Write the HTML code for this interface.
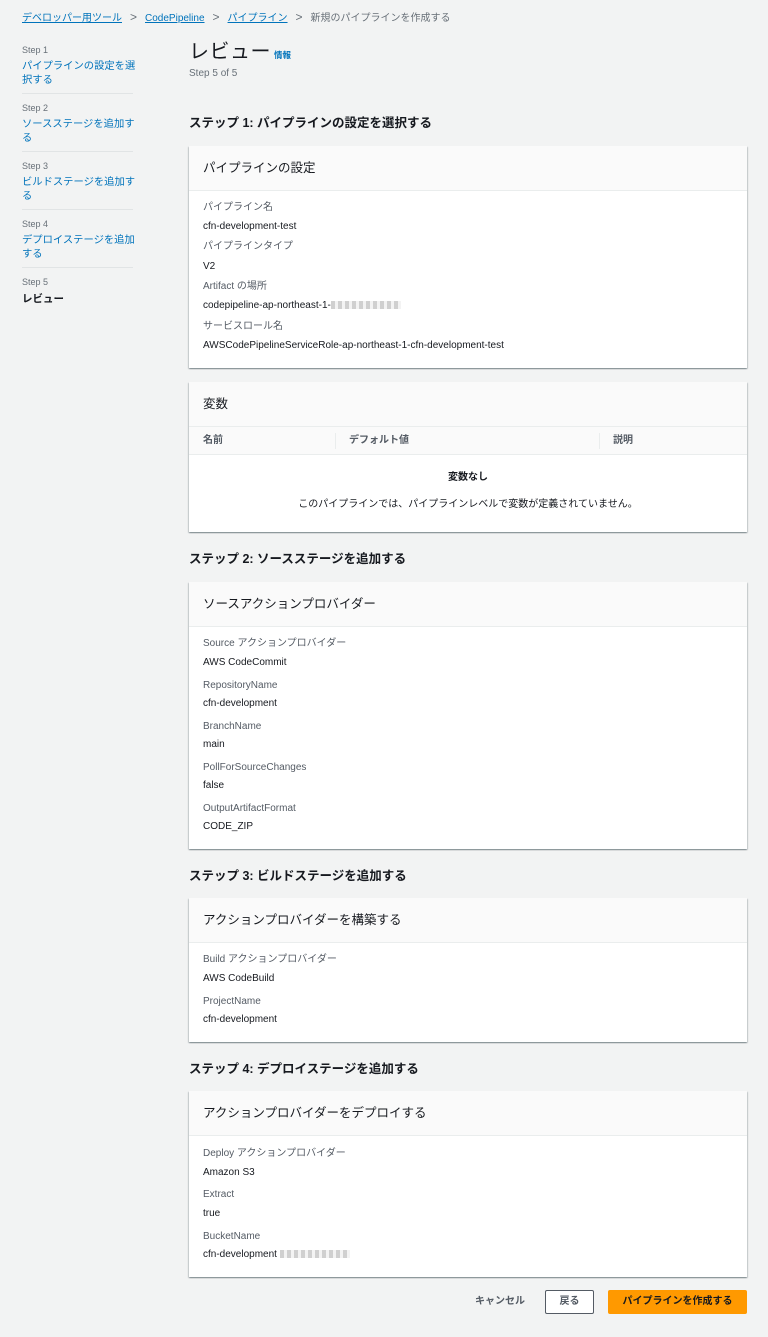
<!DOCTYPE html>
<html><head><meta charset="utf-8">
<style>
*{margin:0;padding:0;box-sizing:border-box}
body{width:768px;height:1337px;background:#f2f3f3;font-family:"Liberation Sans","Noto Sans CJK JP",sans-serif;color:#16191f;position:relative;overflow:hidden;font-size:10px}
.a{position:absolute;white-space:nowrap;line-height:16px}
.lk{color:#0073bb}
.u{text-decoration:underline}
.g{color:#687078}
.card{position:absolute;left:189px;width:558px;background:#fff;box-shadow:0 1px 1px rgba(0,28,36,.3),1px 1px 1px rgba(0,28,36,.15),-1px 1px 1px rgba(0,28,36,.15)}
.hd{height:45px;background:#fafafa;border-bottom:1px solid #eaeded;padding:0 14px;line-height:44px;font-size:12.5px;color:#16191f}
.h2{position:absolute;left:189px;font-size:12.5px;font-weight:bold;line-height:16px;white-space:nowrap}
.lab{color:#545b64}
.div{position:absolute;left:22px;width:111px;border-top:1px solid #e1e4e5}
.blur{display:inline-block;width:70px;height:8px;background:repeating-linear-gradient(90deg,#bbb 0 4px,#eee 4px 7px);vertical-align:middle;opacity:.7}
.sl{position:absolute;left:22px;white-space:nowrap;line-height:14px;font-size:10.3px}
.ch{color:#687078;margin:0 8px;font-size:12px}
</style></head><body>
<div class="a" style="left:22px;top:9px;font-size:10px"><span class="lk u">デベロッパー用ツール</span><span class="ch">&gt;</span><span class="lk u">CodePipeline</span><span class="ch">&gt;</span><span class="lk u">パイプライン</span><span class="ch">&gt;</span><span class="g">新規のパイプラインを作成する</span></div>

<div class="a g" style="left:22px;top:42px;font-size:9px">Step 1</div>
<div class="sl lk" style="top:60px">パイプラインの設定を選<br>択する</div>
<div class="div" style="top:93px"></div>
<div class="a g" style="left:22px;top:100px;font-size:9px">Step 2</div>
<div class="sl lk" style="top:118px">ソースステージを追加す<br>る</div>
<div class="div" style="top:151px"></div>
<div class="a g" style="left:22px;top:158px;font-size:9px">Step 3</div>
<div class="sl lk" style="top:176px">ビルドステージを追加す<br>る</div>
<div class="div" style="top:209px"></div>
<div class="a g" style="left:22px;top:216px;font-size:9px">Step 4</div>
<div class="sl lk" style="top:234px">デプロイステージを追加<br>する</div>
<div class="div" style="top:267px"></div>
<div class="a g" style="left:22px;top:274px;font-size:9px">Step 5</div>
<div class="a" style="left:22px;top:291px;font-weight:bold;font-size:10.5px">レビュー</div>

<div class="a" style="left:189px;top:38px;font-size:20px;line-height:28px;letter-spacing:0.5px">レビュー</div>
<div class="a lk" style="left:274px;top:47px;font-size:8.5px;font-weight:bold">情報</div>
<div class="a g" style="left:189px;top:66px">Step 5 of 5</div>

<div class="h2" style="top:115px">ステップ 1: パイプラインの設定を選択する</div>
<div class="card" style="top:146px;height:222px"><div class="hd">パイプラインの設定</div></div>
<div class="a lab" style="left:203px;top:200px">パイプライン名</div>
<div class="a" style="left:203px;top:219px">cfn-development-test</div>
<div class="a lab" style="left:203px;top:239px">パイプラインタイプ</div>
<div class="a" style="left:203px;top:259px">V2</div>
<div class="a lab" style="left:203px;top:279px">Artifact の場所</div>
<div class="a" style="left:203px;top:298px">codepipeline-ap-northeast-1-<span class="blur"></span></div>
<div class="a lab" style="left:203px;top:319px">サービスロール名</div>
<div class="a" style="left:203px;top:338px">AWSCodePipelineServiceRole-ap-northeast-1-cfn-development-test</div>

<div class="card" style="top:382px;height:150px"><div class="hd">変数</div>
<div style="height:28px;background:#fafafa;border-bottom:1px solid #eaeded;position:relative;font-size:10px;color:#545b64;font-weight:bold">
<span class="a" style="left:14px;top:6px">名前</span>
<span style="position:absolute;left:146px;top:6px;height:16px;border-left:1px solid #eaeded"></span>
<span class="a" style="left:160px;top:6px">デフォルト値</span>
<span style="position:absolute;left:410px;top:6px;height:16px;border-left:1px solid #eaeded"></span>
<span class="a" style="left:424px;top:6px">説明</span></div>
<div style="text-align:center;font-weight:bold;margin-top:15px;line-height:16px">変数なし</div>
<div style="text-align:center;margin-top:11px;line-height:16px">このパイプラインでは、パイプラインレベルで変数が定義されていません。</div>
</div>

<div class="h2" style="top:551px">ステップ 2: ソースステージを追加する</div>
<div class="card" style="top:582px;height:267px"><div class="hd">ソースアクションプロバイダー</div></div>
<div class="a lab" style="left:203px;top:636px">Source アクションプロバイダー</div>
<div class="a" style="left:203px;top:655px">AWS CodeCommit</div>
<div class="a lab" style="left:203px;top:678px">RepositoryName</div>
<div class="a" style="left:203px;top:696px">cfn-development</div>
<div class="a lab" style="left:203px;top:719px">BranchName</div>
<div class="a" style="left:203px;top:737px">main</div>
<div class="a lab" style="left:203px;top:760px">PollForSourceChanges</div>
<div class="a" style="left:203px;top:778px">false</div>
<div class="a lab" style="left:203px;top:801px">OutputArtifactFormat</div>
<div class="a" style="left:203px;top:819px">CODE_ZIP</div>

<div class="h2" style="top:868px">ステップ 3: ビルドステージを追加する</div>
<div class="card" style="top:898px;height:144px"><div class="hd">アクションプロバイダーを構築する</div></div>
<div class="a lab" style="left:203px;top:952px">Build アクションプロバイダー</div>
<div class="a" style="left:203px;top:971px">AWS CodeBuild</div>
<div class="a lab" style="left:203px;top:994px">ProjectName</div>
<div class="a" style="left:203px;top:1012px">cfn-development</div>

<div class="h2" style="top:1061px">ステップ 4: デプロイステージを追加する</div>
<div class="card" style="top:1091px;height:186px"><div class="hd">アクションプロバイダーをデプロイする</div></div>
<div class="a lab" style="left:203px;top:1146px">Deploy アクションプロバイダー</div>
<div class="a" style="left:203px;top:1165px">Amazon S3</div>
<div class="a lab" style="left:203px;top:1187px">Extract</div>
<div class="a" style="left:203px;top:1206px">true</div>
<div class="a lab" style="left:203px;top:1229px">BucketName</div>
<div class="a" style="left:203px;top:1247px">cfn-development <span class="blur"></span></div>

<div class="a" style="left:475px;top:1294px;font-weight:bold;color:#545b64">キャンセル</div>
<div class="a" style="left:545px;top:1290px;width:49px;height:24px;border:1px solid #545b64;border-radius:2px;background:#fff;text-align:center;line-height:22px;font-weight:bold;color:#545b64">戻る</div>
<div class="a" style="left:608px;top:1290px;width:139px;height:24px;background:#f90;border-radius:2px;text-align:center;line-height:24px;font-weight:bold;color:#16191f">パイプラインを作成する</div>
</body></html>
